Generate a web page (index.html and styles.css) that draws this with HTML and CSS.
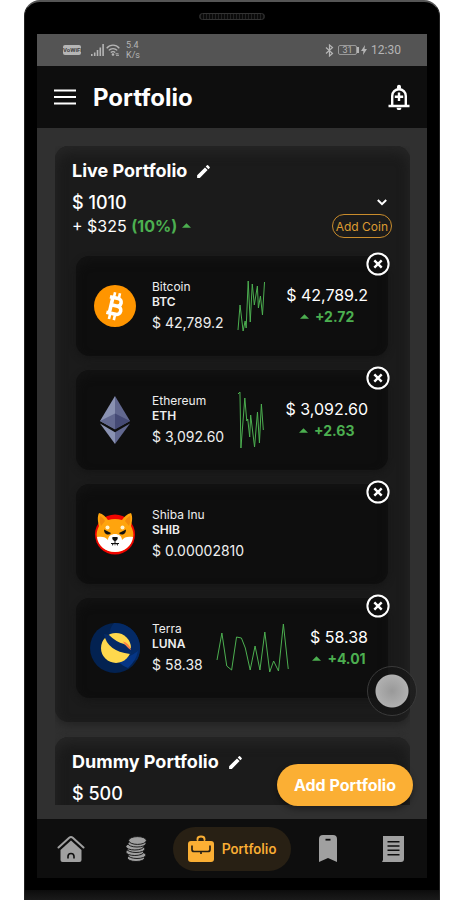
FILE: index.html
```
<!DOCTYPE html>
<html lang="en">
<head>
  <meta charset="UTF-8">
  <meta name="viewport" content="width=device-width, initial-scale=1">
  <title>Portfolio</title>
  <link rel="stylesheet" href="styles.css">
</head>
<body>

<svg class="sprite" aria-hidden="true">
  <symbol id="pencil" viewBox="0 0 24 24"><path d="M3 17.200V21h3.800L17.800 9.900l-3.700-3.700zM20.700 7a1 1 0 0 0 0-1.400l-2.300-2.300a1 1 0 0 0-1.400 0l-1.900 1.800 3.800 3.800z"/></symbol>
  <symbol id="up" viewBox="0 0 10 5"><path d="M0 5l5-5 5 5z"/></symbol>
  <symbol id="close" viewBox="0 0 24 24"><circle cx="12" cy="12" r="10.600" fill="#0e0e0e" stroke="#fff" stroke-width="2"/><path d="M8.300 8.300l7.400 7.400M15.700 8.300l-7.400 7.400" stroke="#fff" stroke-width="2.400"/></symbol>
</svg>

<div class="phone">
  <div class="earpiece"><span class="speaker"></span></div>

  <div class="screen">
    <div class="status">
      <span class="vowifi">VoWiFi</span>
      <svg class="signal" width="13" height="12" viewBox="0 0 13 12"><path d="M.8 12v-2M3.700 12V8.500M6.500 12V6M9.300 12V3.500M12.100 12V0" stroke="#b5b5b5" stroke-width="1.600"/></svg>
      <svg width="14" height="12" viewBox="0 0 14 12" fill="none" stroke="#b5b5b5" stroke-width="1.300"><path d="M.7 4.200c3.500-4 9.100-4 12.600 0M2.800 6.400c2.300-2.500 6.100-2.500 8.400 0M4.800 8.500c1.200-1.300 3.200-1.300 4.400 0"/><circle cx="7" cy="10.500" r=".7"/><path d="M9.500 9.800h3M10 11.300h3" stroke-width="1"/></svg>
      <span class="speed">5.4<br>K/s</span>
      <span class="right">
        <svg width="9" height="13" viewBox="0 0 9 13" fill="none" stroke="#b5b5b5" stroke-width="1.200"><path d="M1 3.500l6.500 6-3 2.500V1l3 2.500-6.500 6"/></svg>
        <span class="battery">31</span>
        <svg width="6" height="10" viewBox="0 0 6 10"><path d="M4 0L0 6h2.400L2 10l4-6H3.500z" fill="#b5b5b5"/></svg>
        <span class="clock">12:30</span>
      </span>
    </div>

    <header class="topbar">
      <button class="icon-btn" aria-label="Menu">
        <svg width="22" height="16" viewBox="0 0 22 16"><path d="M0 1.500h22M0 8h22M0 14.500h22" stroke="#fff" stroke-width="2.200"/></svg>
      </button>
      <h1>Portfolio</h1>
      <button class="icon-btn" aria-label="Add alert">
        <svg width="22" height="26" viewBox="0 0 22 26" fill="none" stroke="#fff" stroke-width="2.400"><path d="M4.200 21v-9a6.800 6.800 0 0 1 13.600 0v9"/><path d="M.5 22h21M11 8.500v8.400M6.800 12.700h8.400"/><path d="M9 2.800a2 2 0 0 1 4 0v2H9zM8.600 23.800h4.800a2.400 2.400 0 0 1-4.800 0z" fill="#fff" stroke="none"/></svg>
      </button>
    </header>

    <main>
      <div class="list">
        <section class="card">
          <h2>Live Portfolio <button class="icon-btn" aria-label="Rename"><svg width="17" height="17"><use href="#pencil"/></svg></button></h2>
          <div class="row">
            <span class="total">$ 1010</span>
            <button class="icon-btn chevron" aria-label="Collapse"><svg width="10" height="7" viewBox="0 0 10 7"><path d="M.8 1L5 5.200 9.200 1" fill="none" stroke="#fff" stroke-width="2"/></svg></button>
          </div>
          <div class="row">
            <span class="change">+ $325 <b>(10%)</b> <svg width="9" height="5"><use href="#up"/></svg></span>
            <button class="add-coin">Add Coin</button>
          </div>

          <ul class="coins">
            <li class="coin">
              <svg class="logo" viewBox="0 0 50 50">
                <circle cx="25" cy="25" r="21" fill="#ff9500"/>
                <g transform="rotate(13 25 25)" fill="none" stroke="#fff">
                  <path d="M21 17v16M18 17h8.500a3.700 3.700 0 0 1 0 7.600H21M26.500 24.600h1a4.100 4.100 0 0 1 0 8.400H18" stroke-width="3.600"/>
                  <path d="M22 11.500v5M27 11.500v5M22 34v5M27 34v5" stroke-width="2.600"/>
                </g>
              </svg>
              <div class="info"><span>Bitcoin</span><strong>BTC</strong><span class="price">$ 42,789.2</span></div>
              <svg class="chart" height="50" viewBox="0 0 26 50" preserveAspectRatio="none"><polyline points="0,49 2,24 5,50 7,40 8,47 10,0 12,41 14,3 16,24 19,5 20,27 22,15 24,34 26,1"/></svg>
              <div class="value"><span>$ 42,789.2</span><b><svg width="9" height="5"><use href="#up"/></svg>+2.72</b></div>
              <button class="icon-btn remove" aria-label="Remove Bitcoin"><svg width="24" height="24"><use href="#close"/></svg></button>
            </li>
            <li class="coin">
              <svg class="logo" viewBox="0 0 50 50">
                <path d="M25 1L10 26l15 8z" fill="#8a92b2"/><path d="M25 1l15 25-15 8z" fill="#62688f"/>
                <path d="M25 18.500L10 26l15 8.500z" fill="#62688f"/><path d="M25 18.500L40 26l-15 8.500z" fill="#454a75"/>
                <path d="M10 28.500l15 8.700V49z" fill="#8a92b2"/><path d="M40 28.500l-15 8.700V49z" fill="#62688f"/>
              </svg>
              <div class="info"><span>Ethereum</span><strong>ETH</strong><span class="price">$ 3,092.60</span></div>
              <svg class="chart" height="56" viewBox="0 0 26 56" preserveAspectRatio="none"><polyline points="0,2 2,0 3,56 7,6 9,29 10,27 12,45 13,23 17,55 20,20 22,51 24,12 26,38"/></svg>
              <div class="value"><span>$ 3,092.60</span><b><svg width="9" height="5"><use href="#up"/></svg>+2.63</b></div>
              <button class="icon-btn remove" aria-label="Remove Ethereum"><svg width="24" height="24"><use href="#close"/></svg></button>
            </li>
            <li class="coin">
              <svg class="logo" viewBox="0 0 50 50">
                <circle cx="25" cy="25.500" r="20" fill="#f00500"/>
                <path d="M9 4c4 1 7 4 9 7q7-2 14 0c2-3 5-6 9-7 2 4 1 9 0 13 2 4 3 8 2 12-2 8-9 14-18 14S9 37 7 29c-1-4 0-8 2-12-1-4-2-9 0-13z" fill="#ffa40d"/>
                <path d="M10 7c3 2 4 3 5 5l-4 5c-1-3-2-7-1-10zM40 7c-3 2-4 3-5 5l4 5c1-3 2-7 1-10z" fill="#f28a0c"/>
                <path d="M7 28c5-1 9 0 11 3 0-8 14-8 14 0 2-3 6-4 11-3-1 9-9 15-18 15S8 37 7 28z" fill="#fff"/>
                <circle cx="17.500" cy="18.500" r="2" fill="#fff3d0"/><circle cx="32.500" cy="18.500" r="2" fill="#fff3d0"/>
                <path d="M14 20.500l7 3.500q-1 2-4 1.500-3-1-3-5zM36 20.500L29 24q1 2 4 1.500 3-1 3-5zM22.500 28h5q1 2.500-2 4v2.500h-1V32q-3-1.500-2-4zM21 34h8v1h-1l-.7 2-.8-2h-1l-.5 2-.5-2h-1l-.8 2-.7-2h-1z" fill="#111"/>
              </svg>
              <div class="info"><span>Shiba Inu</span><strong>SHIB</strong><span class="price">$ 0.00002810</span></div>
              <button class="icon-btn remove" aria-label="Remove Shiba Inu"><svg width="24" height="24"><use href="#close"/></svg></button>
            </li>
            <li class="coin">
              <svg class="logo" viewBox="0 0 50 50">
                <circle cx="25" cy="25" r="25" fill="#032251"/>
                <path d="M24 0q-6 7-4 15l14 25 13-3a25 25 0 0 0-22-37z" fill="#042a66"/>
                <path d="M28 38q12-4 20-10-2 10-10 17-6-2-10-7z" fill="#053585"/>
                <circle cx="26" cy="25" r="15" fill="#ffd84d"/>
                <path d="M14 11q3 17 26 20l3-5q-4-1-9-5-8-2-15-9z" fill="#052a66"/>
                <path d="M33 18.500q6 1 8 8.500-4-2-8-8.500z" fill="#fc8045"/>
              </svg>
              <div class="info"><span>Terra</span><strong>LUNA</strong><span class="price">$ 58.38</span></div>
              <svg class="chart" height="48" viewBox="0 0 73 48" preserveAspectRatio="none"><polyline points="0,36 5,9 10,42 15,46 20,13 25,14 29,24 34,46 39,22 44,46 49,8 54,48 58,37 63,47 68,0 73,45"/></svg>
              <div class="value"><span>$ 58.38</span><b><svg width="9" height="5"><use href="#up"/></svg>+4.01</b></div>
              <button class="icon-btn remove" aria-label="Remove Terra"><svg width="24" height="24"><use href="#close"/></svg></button>
            </li>
          </ul>
        </section>

        <section class="card">
          <h2>Dummy Portfolio <button class="icon-btn" aria-label="Rename"><svg width="17" height="17"><use href="#pencil"/></svg></button></h2>
          <div class="row"><span class="total">$ 500</span></div>
        </section>
      </div>

      <button class="add-portfolio">Add Portfolio</button>
      <span class="touch"></span>
    </main>

    <nav class="tabs">
      <a href="#" aria-label="Home"><svg width="28" height="28" viewBox="0 0 28 28"><path d="M1.500 12.500L12.200 2.700q1.800-1.500 3.600 0l10.700 9.800" fill="none" stroke="#a0a0a0" stroke-width="2" stroke-linecap="round"/><path d="M14 5.500l10.500 9.500v10a2 2 0 0 1-2 2h-17a2 2 0 0 1-2-2V15z" fill="#a0a0a0"/><path d="M11 23.500v-2a3 3 0 0 1 6 0v2" fill="none" stroke="#0e0e0e" stroke-width="1.600"/></svg></a>
      <a href="#" aria-label="Coins"><svg width="22" height="26" viewBox="0 0 22 26" fill="#a0a0a0" stroke="#0e0e0e" stroke-width=".9"><ellipse cx="11" cy="22" rx="8.700" ry="3.500"/><ellipse cx="12" cy="19" rx="9" ry="3.500"/><ellipse cx="9.800" cy="16" rx="9" ry="3.500"/><ellipse cx="11" cy="13" rx="9" ry="3.500"/><ellipse cx="9.800" cy="10.500" rx="9" ry="3.500"/><ellipse cx="12" cy="7.500" rx="9" ry="3.500"/><ellipse cx="12.500" cy="4.500" rx="8.900" ry="3.900"/></svg></a>
      <a href="#" class="active"><svg width="26" height="27" viewBox="0 0 26 27"><path d="M9.500 5V4q0-2.500 3.500-2.500T16.500 4v1" fill="none" stroke="#fbaf34" stroke-width="1.900" stroke-linecap="round"/><rect y="6" width="26" height="21" rx="3" fill="#fbaf34"/><path d="M4 10.500v4q0 2 2 2h14q2 0 2-2v-4M13 16.500V19" fill="none" stroke="#282014" stroke-width="1.700"/></svg>Portfolio</a>
      <a href="#" aria-label="Saved"><svg width="18" height="27" viewBox="0 0 18 27"><path d="M0 27V4q0-4 4-4h10q4 0 4 4v23l-9-4z" fill="#a0a0a0"/><path d="M6.500 4.700h5" stroke="#0e0e0e" stroke-width="1.800"/></svg></a>
      <a href="#" aria-label="News"><svg width="22" height="26" viewBox="0 0 22 26"><path d="M1 0h21v23q0 3-3 3H0l1-2z" fill="#a0a0a0"/><path d="M5.500 5.800h12M5.500 10h12M5.500 14.300h12M5.500 18.700h12" stroke="#0e0e0e" stroke-width="1.500"/></svg></a>
    </nav>
  </div>

  <div class="chin"></div>
</div>

</body>
</html>
```
FILE: styles.css
```
*, *:before, *:after {
  box-sizing: border-box;
}

body {
  margin: 0;
  background: #fff;
  color: #fff;
  font-family: Inter, Roboto, sans-serif;
}

.sprite {
  display: none;
}

svg {
  flex: none;
}

button {
  font-family: inherit;
  cursor: pointer;
}

.icon-btn {
  display: flex;
  padding: 0;
  border: none;
  background: none;
  color: #fff;
  fill: #fff;
}

/* phone body */

.phone {
  display: flex;
  flex-direction: column;
  height: 100vh;
  margin: 0 20px 0 24px;
  background: #000;
  border: 1px solid #222;
  border-top: 2px solid #555;
  border-bottom: none;
  border-radius: 16px 16px 0 0;
}

.earpiece {
  flex: none;
  height: 32px;
  padding-top: 11px;
}

.speaker {
  display: block;
  width: 66px;
  height: 7px;
  margin: 0 auto;
  border: 1px solid #333;
  border-radius: 4px;
  background: repeating-linear-gradient(90deg, #222 0 1px, #0a0a0a 1px 3px);
}

.screen {
  flex: 1;
  min-height: 0;
  display: flex;
  flex-direction: column;
  margin: 0 12px 12px;
  background: #303030;
}

.chin {
  flex: none;
  height: 10px;
  background: linear-gradient(#0c0c0c, #1a1a1a);
}

/* status bar */

.status {
  flex: none;
  display: flex;
  align-items: center;
  height: 32px;
  padding: 0 26px;
  background: #545454;
  color: #b5b5b5;
  font-family: Roboto, sans-serif;
}

.vowifi {
  width: 18px;
  height: 10px;
  border-radius: 2px;
  background: #b5b5b5;
  color: #444;
  font-size: 6px;
  font-weight: 700;
  line-height: 10px;
  text-align: center;
}

.signal {
  margin: 0 2px 0 10px;
}

.speed {
  margin-left: 6px;
  font-size: 9px;
  line-height: 10px;
}

.right {
  display: flex;
  align-items: center;
  gap: 4px;
  margin-left: auto;
}

.battery {
  position: relative;
  width: 19px;
  height: 10px;
  border: 1px solid #999;
  border-radius: 2px;
  font-size: 9px;
  line-height: 9px;
  text-align: center;
}

.battery:after {
  content: '';
  position: absolute;
  top: 1px;
  right: -3px;
  width: 2px;
  height: 6px;
  background: #b5b5b5;
}

.clock {
  font-size: 12px;
}

/* header */

.topbar {
  flex: none;
  display: flex;
  align-items: center;
  height: 62px;
  padding: 0 17px;
  background: #0e0e0e;
}

h1 {
  flex: 1;
  margin: 0 0 0 17px;
  font-size: 24px;
  font-weight: 700;
}

/* portfolio list */

main {
  position: relative;
  flex: 1;
  min-height: 0;
  padding: 18px 17px 14px 18px;
}

.list {
  height: 100%;
  overflow: hidden;
}

.card {
  margin-bottom: 15px;
  padding: 11px 18px 24px 17px;
  border-radius: 14px;
  background: #1b1b1b;
  box-shadow: inset 0 6px 12px #262626, 0 4px 8px #242424;
}

h2 {
  display: flex;
  align-items: center;
  gap: 8px;
  margin: 0 0 5px;
  font-size: 18px;
  font-weight: 700;
  line-height: 28px;
}

.row {
  display: flex;
  align-items: center;
  justify-content: space-between;
  height: 24px;
}

.total {
  font-size: 18px;
  font-weight: 500;
}

.chevron {
  margin-right: 5px;
}

.change {
  font-size: 16px;
  font-weight: 400;
}

.change b,
.value b {
  color: #4caf50;
  fill: #4caf50;
  font-weight: 700;
}

.change svg {
  margin-bottom: 4px;
  fill: #4caf50;
}

.add-coin {
  height: 24px;
  padding: 0 3px;
  border: 1px solid #c98c2c;
  border-radius: 12px;
  background: none;
  color: #dd9b32;
  font-size: 12px;
}

.coins {
  display: grid;
  gap: 14px;
  margin: 18px 4px 0;
  padding: 0;
  list-style: none;
}

.coin {
  position: relative;
  display: flex;
  align-items: center;
  height: 100px;
  padding: 0 20px 0 14px;
  border-radius: 14px;
  background: #0e0e0e;
  box-shadow: inset 0 5px 10px #131313, 0 3px 6px #161616;
}

.logo {
  width: 50px;
  height: 50px;
}

.info {
  display: flex;
  flex-direction: column;
  margin-left: 12px;
  color: #eee;
  font-size: 12px;
  line-height: 15px;
}

.info strong {
  font-weight: 600;
}

.price {
  margin-top: 3px;
  font-size: 14px;
  line-height: 22px;
}

.chart {
  flex: 1;
  width: 0;
  min-width: 0;
  margin: 0 22px 0 14px;
  overflow: visible;
}

.chart polyline {
  fill: none;
  stroke: #4caf50;
  stroke-width: 1;
  vector-effect: non-scaling-stroke;
}

.value {
  display: flex;
  flex-direction: column;
  align-items: center;
  font-size: 16px;
  line-height: 21px;
}

.value b {
  display: flex;
  align-items: center;
  gap: 6px;
  font-size: 14px;
}

.remove {
  position: absolute;
  top: -4px;
  right: -2px;
}

.add-portfolio {
  position: absolute;
  right: 14px;
  bottom: 13px;
  height: 42px;
  padding: 0 17px;
  border: none;
  border-radius: 21px;
  background: #fbaf34;
  box-shadow: 0 3px 6px rgba(0, 0, 0, 0.4);
  color: #fff;
  font-size: 16px;
  font-weight: 700;
}

/* finger marker over the list */
.touch {
  position: absolute;
  right: 10px;
  bottom: 103px;
  width: 50px;
  height: 50px;
  border: 1px solid #3a3a3a;
  border-radius: 50%;
  background: radial-gradient(#999 0, #b0b0b0 16px, rgba(20, 20, 20, 0.6) 17px);
}

/* bottom tabs */

.tabs {
  flex: none;
  display: flex;
  align-items: center;
  height: 59px;
  padding: 0 1px;
  background: #0e0e0e;
}

.tabs a {
  flex: 1;
  display: flex;
  align-items: center;
  justify-content: center;
  height: 44px;
  text-decoration: none;
}

.tabs .active {
  flex: none;
  gap: 8px;
  margin: 0 4px;
  padding: 0 15px;
  border-radius: 22px;
  background: #282014;
  color: #fbaf34;
  font-family: Roboto, sans-serif;
  font-size: 14px;
  font-weight: 500;
}
```
